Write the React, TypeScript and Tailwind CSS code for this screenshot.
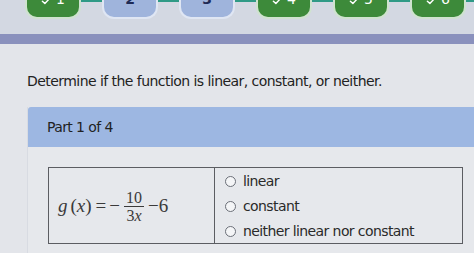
import React from "react";

const tabs = [
  { label: "1", done: true },
  { label: "2", done: false },
  { label: "3", done: false },
  { label: "4", done: true },
  { label: "5", done: true },
  { label: "6", done: true },
];

function Check({ className }: { className?: string }) {
  return (
    <svg viewBox="0 0 12 10" className={className} fill="none" stroke="currentColor" strokeWidth="1.8" strokeLinecap="round" strokeLinejoin="round">
      <path d="M1.5 5.2 L4.6 8.2 L10.5 1.8" />
    </svg>
  );
}

export default function App() {
  return (
    <div className="w-[474px] h-[253px] overflow-hidden bg-[#e3e5ea] text-[#222] [font-family:'DejaVu_Sans',Verdana,sans-serif]">
      {/* top bar */}
      <div className="h-[34px] bg-[#d3d8e2] flex flex-col">
        <div className="h-[2px] ml-[80px] bg-[#2f9a86]" />
        <div className="flex gap-[21px] pl-[25px] mt-[-2px]">
          {tabs.map((t) =>
            t.done ? (
              <div
                key={t.label}
                className="relative w-[56px] h-[30px] mt-[-11px] rounded-b-[12px] bg-[#3d8a3a] border-2 border-t-0 border-[#cfe3cf] flex items-end justify-center pb-[11px] text-white text-[14px] leading-none gap-[5px]"
              >
                <Check className="w-[10px] h-[8px] mb-[1px]" />
                <span>{t.label}</span>
              </div>
            ) : (
              <div
                key={t.label}
                className="relative w-[56px] h-[30px] mt-[-11px] rounded-b-[12px] bg-[#9fb4dc] border-2 border-t-0 border-[#dfe6f3] flex items-end justify-center pb-[11px] text-[#1e2a55] text-[14px] leading-none font-bold"
              >
                <span>{t.label}</span>
              </div>
            )
          )}
        </div>
      </div>
      <div className="h-[10px] bg-[#8a91bd]" />

      {/* content */}
      <div className="pl-[27px] pt-[27px]">
        <p className="text-[14px] leading-[20px] tracking-[-0.55px]">
          Determine if the function is linear, constant, or neither.
        </p>
        <div className="mt-[16px] border-l border-[#d8dbe2] bg-[#e6e8ec]">
          <div className="h-[40px] bg-[#9db7e2] rounded-tl-[3px] flex items-center pl-[19px] text-[14px] tracking-[-0.6px]">
            Part 1 of 4
          </div>
          <div className="pl-[20px] pt-[20px] pb-[20px] pr-[11px]">
            <div className="flex h-[77px] border-[1.5px] border-[#5b5d62]">
              <div className="w-[166px] border-r-[1.5px] border-[#5b5d62] flex items-center pl-[9px] pt-[2px] text-[19px] [font-family:'Liberation_Serif','Times_New_Roman',serif] text-[#3a3a3a]">
                <span className="italic">g</span>
                <span className="ml-[3px]">(</span>
                <span className="italic">x</span>
                <span>)</span>
                <span className="ml-[4px]">=</span>
                <span className="ml-[3px]">−</span>
                <span className="inline-flex flex-col items-center ml-[4px] mr-[4px] text-[16px] leading-[17px]">
                  <span className="px-[2px]">10</span>
                  <span className="w-full h-px bg-[#3a3a3a]" />
                  <span>
                    3<span className="italic">x</span>
                  </span>
                </span>
                <span>−6</span>
              </div>
              <div className="flex-1 flex flex-col justify-center gap-[6px] pl-[10px] pt-[2px] text-[14px] leading-[19px] tracking-[-0.6px] text-[#2a2a2a]">
                {["linear", "constant", "neither linear nor constant"].map((o) => (
                  <div key={o} className="flex items-center gap-[7px]">
                    <span className="w-[11px] h-[11px] rounded-full border border-[#6b6f78] bg-[#f4f5f7]" />
                    <span>{o}</span>
                  </div>
                ))}
              </div>
            </div>
          </div>
        </div>
      </div>
    </div>
  );
}
